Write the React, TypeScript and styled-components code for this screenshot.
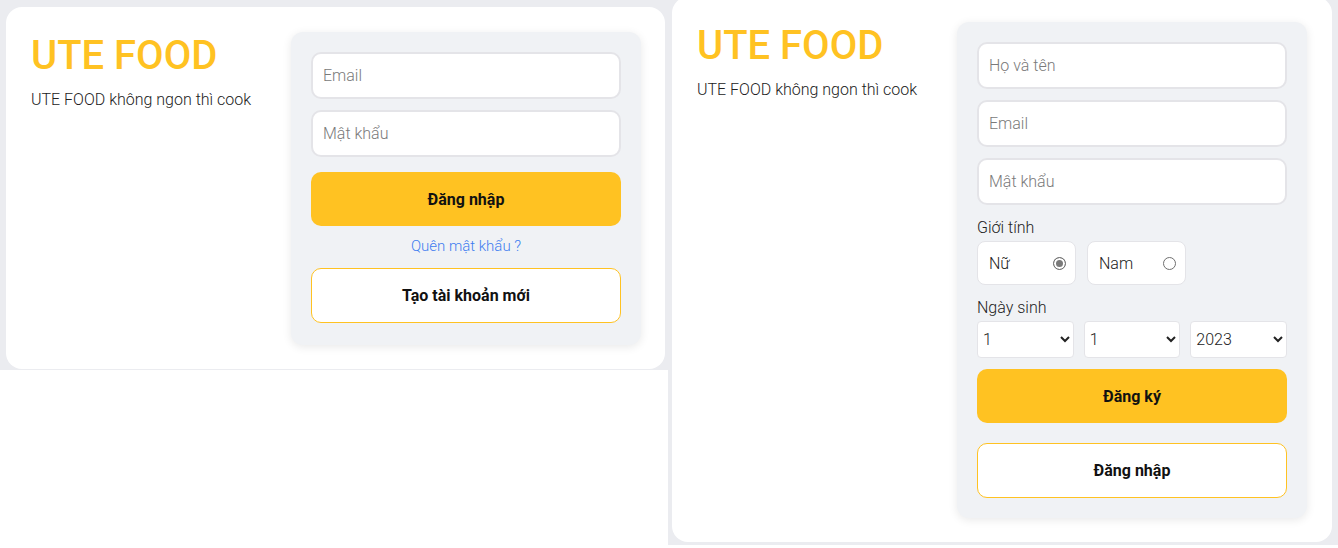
import React from "react";
import styled, { createGlobalStyle } from "styled-components";

const Global = createGlobalStyle`
  html, body { margin: 0; padding: 0; background: #ffffff; }
  body { font-family: Roboto, "Noto Sans", "Liberation Sans", sans-serif; }
  * { box-sizing: border-box; }
`;

const Page = styled.div`
  display: flex;
  align-items: flex-start;
  width: 1338px;
`;

const Frame = styled.div<{ $w: number; $h: number }>`
  width: ${(p) => p.$w}px;
  height: ${(p) => p.$h}px;
  background: #ebecf0;
  overflow: hidden;
  display: flex;
  align-items: flex-start;
`;

const Card = styled.div<{ $m: string; $w: number; $pr: number }>`
  margin: ${(p) => p.$m};
  width: ${(p) => p.$w}px;
  background: #ffffff;
  border-radius: 16px;
  display: flex;
  justify-content: space-between;
  align-items: flex-start;
  padding: 25px ${(p) => p.$pr}px 24px 25px;
`;

const Brand = styled.div<{ $gap: number }>`
  display: flex;
  flex-direction: column;
  gap: ${(p) => p.$gap}px;
`;

const Title = styled.h1`
  margin: 0;
  font-size: 40px;
  font-weight: 500;
  color: #ffc222;
  line-height: 47px;
`;

const Tagline = styled.p`
  margin: 0;
  font-size: 16px;
  font-weight: 300;
  line-height: 19px;
  color: #222222;
`;

const FormBox = styled.form<{ $pb: number }>`
  width: 350px;
  background: #f0f2f5;
  border-radius: 12px;
  padding: 20px 20px ${(p) => p.$pb}px 20px;
  box-shadow: 0 2px 10px rgba(0, 0, 0, 0.09);
  display: flex;
  flex-direction: column;
`;

const Field = styled.input<{ $mt?: number }>`
  height: 47px;
  width: 100%;
  margin-top: ${(p) => p.$mt ?? 0}px;
  border: 2px solid #e4e4e8;
  border-radius: 10px;
  background: #ffffff;
  padding: 0 10px;
  font-family: Roboto, "Noto Sans", sans-serif;
  font-size: 16px;
  font-weight: 300;
  color: #333;
  outline: none;
  &::placeholder { color: #7a7a7a; font-weight: 300; }
`;

const PrimaryButton = styled.button<{ $mt: number }>`
  margin-top: ${(p) => p.$mt}px;
  height: 54px;
  width: 100%;
  border: none;
  border-radius: 10px;
  background: #ffc222;
  color: #111;
  font-family: Roboto, "Noto Sans", sans-serif;
  font-size: 16px;
  font-weight: 700;
  cursor: pointer;
`;

const OutlineButton = styled.button<{ $mt: number }>`
  margin-top: ${(p) => p.$mt}px;
  height: 55px;
  width: 100%;
  border: 1px solid #ffc222;
  border-radius: 10px;
  background: #ffffff;
  color: #111;
  font-family: Roboto, "Noto Sans", sans-serif;
  font-size: 16px;
  font-weight: 700;
  cursor: pointer;
`;

const ForgotLink = styled.a`
  display: block;
  margin-top: 10px;
  line-height: 20px;
  text-align: center;
  font-size: 15px;
  font-weight: 300;
  color: #3d7cf0;
  text-decoration: none;
`;

const FieldLabel = styled.div`
  margin-top: 13px;
  line-height: 19px;
  font-size: 16px;
  font-weight: 300;
  color: #222222;
`;

const RadioRow = styled.div`
  margin-top: 4px;
  display: flex;
  gap: 11px;
`;

const RadioCard = styled.label`
  width: 99px;
  height: 44px;
  background: #ffffff;
  border: 1px solid #e4e4e8;
  border-radius: 8px;
  display: flex;
  align-items: center;
  justify-content: space-between;
  padding: 0 9px 0 11px;
  font-size: 16px;
  font-weight: 300;
  color: #222;
`;

const Radio = styled.input`
  appearance: none;
  margin: 0;
  width: 13px;
  height: 13px;
  border-radius: 50%;
  border: 1px solid #6f6f6f;
  background: #ffffff;
  &:checked {
    background: #7a7a7a;
    box-shadow: inset 0 0 0 2px #ffffff;
  }
`;

const SelectRow = styled.div`
  margin-top: 4px;
  display: grid;
  grid-template-columns: repeat(3, 1fr);
  gap: 10px;
`;

const Select = styled.select`
  height: 37px;
  width: 100%;
  background: #ffffff;
  border: 1px solid #e4e4e8;
  border-radius: 4px;
  padding: 0 1px;
  font-family: Roboto, "Noto Sans", sans-serif;
  font-size: 16px;
  font-weight: 300;
  color: #222;
  outline: none;
`;

const range = (a: number, b: number) => Array.from({ length: b - a + 1 }, (_, i) => a + i);

function BrandBlock({ gap }: { gap: number }) {
  return (
    <Brand $gap={gap}>
      <Title>UTE FOOD</Title>
      <Tagline>UTE FOOD không ngon thì cook</Tagline>
    </Brand>
  );
}

export default function App() {
  return (
    <>
      <Global />
      <Page>
        <Frame $w={668} $h={370}>
          <Card $m="7px 3px 0 6px" $w={659} $pr={24}>
            <BrandBlock gap={11} />
            <FormBox $pb={22} onSubmit={(e) => e.preventDefault()}>
              <Field placeholder="Email" />
              <Field $mt={11} type="password" placeholder="Mật khẩu" />
              <PrimaryButton $mt={15} type="button">Đăng nhập</PrimaryButton>
              <ForgotLink href="#">Quên mật khẩu ?</ForgotLink>
              <OutlineButton $mt={12} type="button">Tạo tài khoản mới</OutlineButton>
            </FormBox>
          </Card>
        </Frame>
        <Frame $w={670} $h={545}>
          <Card $m="-3px 6px 0 4px" $w={660} $pr={25}>
            <BrandBlock gap={11} />
            <FormBox $pb={20} onSubmit={(e) => e.preventDefault()}>
              <Field placeholder="Họ và tên" />
              <Field $mt={11} placeholder="Email" />
              <Field $mt={11} type="password" placeholder="Mật khẩu" />
              <FieldLabel>Giới tính</FieldLabel>
              <RadioRow>
                <RadioCard>
                  Nữ
                  <Radio type="radio" name="gender" defaultChecked />
                </RadioCard>
                <RadioCard>
                  Nam
                  <Radio type="radio" name="gender" />
                </RadioCard>
              </RadioRow>
              <FieldLabel>Ngày sinh</FieldLabel>
              <SelectRow>
                <Select defaultValue="1">
                  {range(1, 31).map((d) => (
                    <option key={d} value={d}>{d}</option>
                  ))}
                </Select>
                <Select defaultValue="1">
                  {range(1, 12).map((m) => (
                    <option key={m} value={m}>{m}</option>
                  ))}
                </Select>
                <Select defaultValue="2023">
                  {range(1950, 2023).reverse().map((y) => (
                    <option key={y} value={y}>{y}</option>
                  ))}
                </Select>
              </SelectRow>
              <PrimaryButton $mt={11} type="button">Đăng ký</PrimaryButton>
              <OutlineButton $mt={20} type="button">Đăng nhập</OutlineButton>
            </FormBox>
          </Card>
        </Frame>
      </Page>
    </>
  );
}
